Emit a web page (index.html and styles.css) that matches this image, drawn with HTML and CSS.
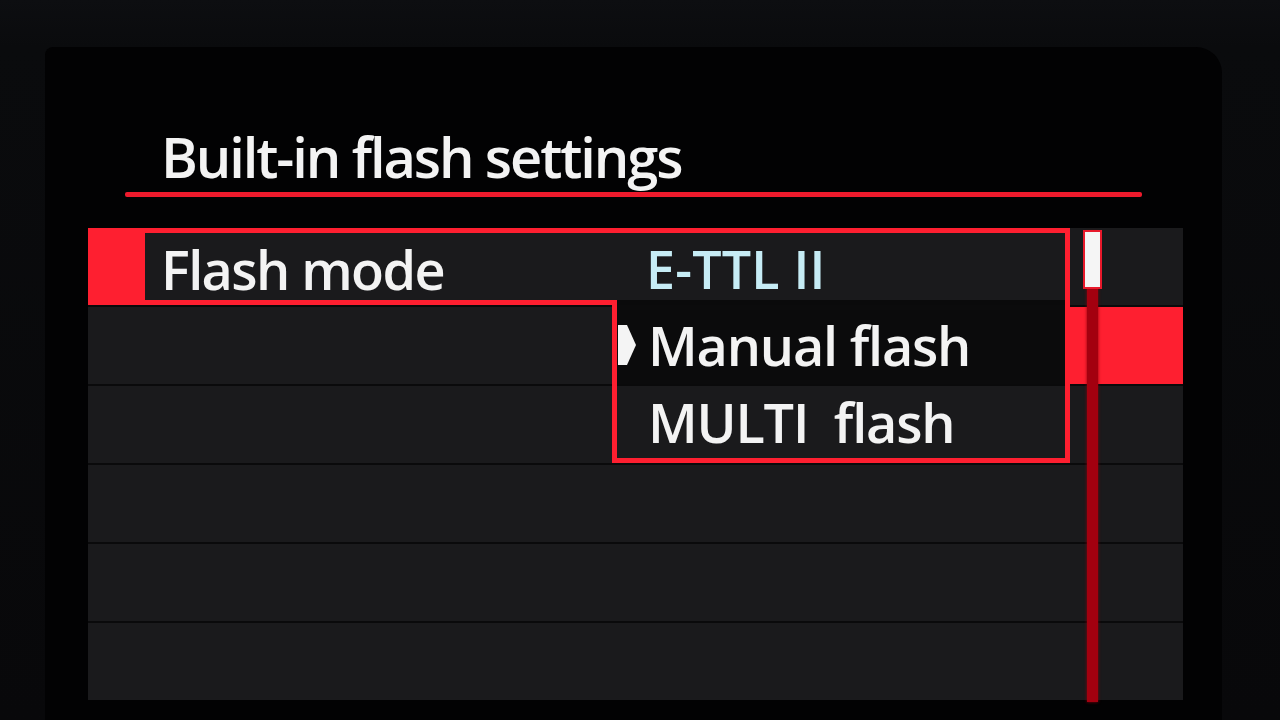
FILE: index.html
```html
<!DOCTYPE html>
<html lang="en">
<head>
<meta charset="utf-8">
<title>Built-in flash settings</title>
<link rel="stylesheet" href="styles.css">
</head>
<body>
<div class="bezel">
  <div class="screen">
    <h1 class="title">Built-in flash settings</h1>
    <div class="title-rule"></div>
    <div class="list">
      <div class="row">
        <div class="row-main is-active">
          <span class="label">Flash mode</span>
          <span class="value">E-TTL II</span>
        </div>
        <div class="row-rest"></div>
      </div>
      <div class="row">
        <div class="row-main"></div>
        <div class="row-rest is-marked"></div>
      </div>
      <div class="row"><div class="row-main"></div><div class="row-rest"></div></div>
      <div class="row"><div class="row-main"></div><div class="row-rest"></div></div>
      <div class="row"><div class="row-main"></div><div class="row-rest"></div></div>
      <div class="row"><div class="row-main"></div><div class="row-rest"></div></div>

      <div class="popup">
        <div class="option is-selected">
          <span class="marker"><svg width="18" height="40" viewBox="0 0 18 40"><polygon points="0,0 9,0 18,20 9,40 0,40" fill="#f4f4f4"/></svg></span>
          <span class="option-text">Manual flash</span>
        </div>
        <div class="option">
          <span class="marker"></span>
          <span class="option-text">MULTI&nbsp; flash</span>
        </div>
      </div>

      <div class="scrollbar">
        <div class="scroll-thumb"></div>
      </div>
    </div>
  </div>
</div>
</body>
</html>
```
FILE: styles.css
```css
html, body {
  margin: 0;
  padding: 0;
}
body {
  width: 1280px;
  height: 720px;
  overflow: hidden;
  background: #0b0c0e;
  font-family: "Open Sans", "Noto Sans", "Liberation Sans", sans-serif;
  font-variant-ligatures: none;
}
.bezel {
  height: 720px;
  box-sizing: border-box;
  padding: 47px 58px 0 45px;
  background: linear-gradient(180deg, #0d0e11 0, #0a0b0d 47px, #08080a 100%);
}
.screen {
  height: 673px;
  background: #020203;
  border-radius: 8px 26px 0 0;
  display: flex;
  flex-direction: column;
}
.title {
  margin: 0;
  padding: 81px 0 0 116px;
  font-size: 56px;
  line-height: 56px;
  font-weight: 600;
  color: #f3f3f3;
  letter-spacing: -2.1px;
}
.title-rule {
  margin: 8px 0 0 80px;
  width: 1017px;
  height: 5px;
  background: #ee1a2c;
  border-radius: 2px;
}
.list {
  position: relative;
  margin: 31px 0 0 43px;
  width: 1095px;
  display: flex;
  flex-direction: column;
  gap: 2px;
  background: #0a0a0b;
}
.row {
  height: 77px;
  display: flex;
  background: #1a1a1c;
}
.row-main {
  width: 982px;
  box-sizing: border-box;
  display: grid;
  grid-template-columns: 485px 1fr;
  align-items: center;
  padding-left: 75px;
}
.row-main.is-active {
  position: relative;
  border-top: 5px solid #fe1f30;
  border-left: 57px solid #fe1f30;
  border-right: 5px solid #fe1f30;
  padding-left: 16px;
}
.row-main.is-active::after {
  content: "";
  position: absolute;
  left: -57px;
  bottom: 0;
  width: 529px;
  height: 5px;
  background: #fe1f30;
}
.row-rest {
  flex: 1;
}
.row-rest.is-marked {
  background: #fe1f30;
}
.label {
  font-size: 54px;
  font-weight: 600;
  color: #f3f3f3;
  line-height: 72px;
  letter-spacing: -1.6px;
}
.value {
  font-size: 52px;
  font-weight: 600;
  color: #c6ecf5;
  line-height: 72px;
  letter-spacing: 0.2px;
}
.popup {
  position: absolute;
  left: 524px;
  top: 72px;
  width: 458px;
  height: 163px;
  box-sizing: border-box;
  border: 5px solid #fe1f30;
  border-top: none;
  padding-top: 5px;
  background: #0a0a0b;
  display: flex;
  flex-direction: column;
  gap: 2px;
}
.option {
  height: 72px;
  display: flex;
  align-items: center;
  background: #1a1a1c;
}
.option.is-selected {
  height: 79px;
  background: #0b0b0c;
}
.marker {
  width: 31px;
  display: flex;
  align-items: center;
  padding-left: 1px;
  box-sizing: border-box;
}
.option-text {
  font-size: 54px;
  font-weight: 600;
  color: #f3f3f3;
  line-height: 72px;
  white-space: pre;
  letter-spacing: -1.2px;
}
.scrollbar {
  position: absolute;
  left: 995px;
  top: 2px;
  width: 19px;
  height: 470px;
  display: flex;
  justify-content: center;
}
.scrollbar::before {
  content: "";
  position: absolute;
  left: 4px;
  top: 2px;
  width: 11px;
  height: 470px;
  background: #a3000f;
  box-shadow: 0 0 3px #8a000c;
}
.scroll-thumb {
  position: relative;
  width: 15px;
  height: 55px;
  background: #f5f5f5;
  border: 2px solid #e8192b;
}
```
